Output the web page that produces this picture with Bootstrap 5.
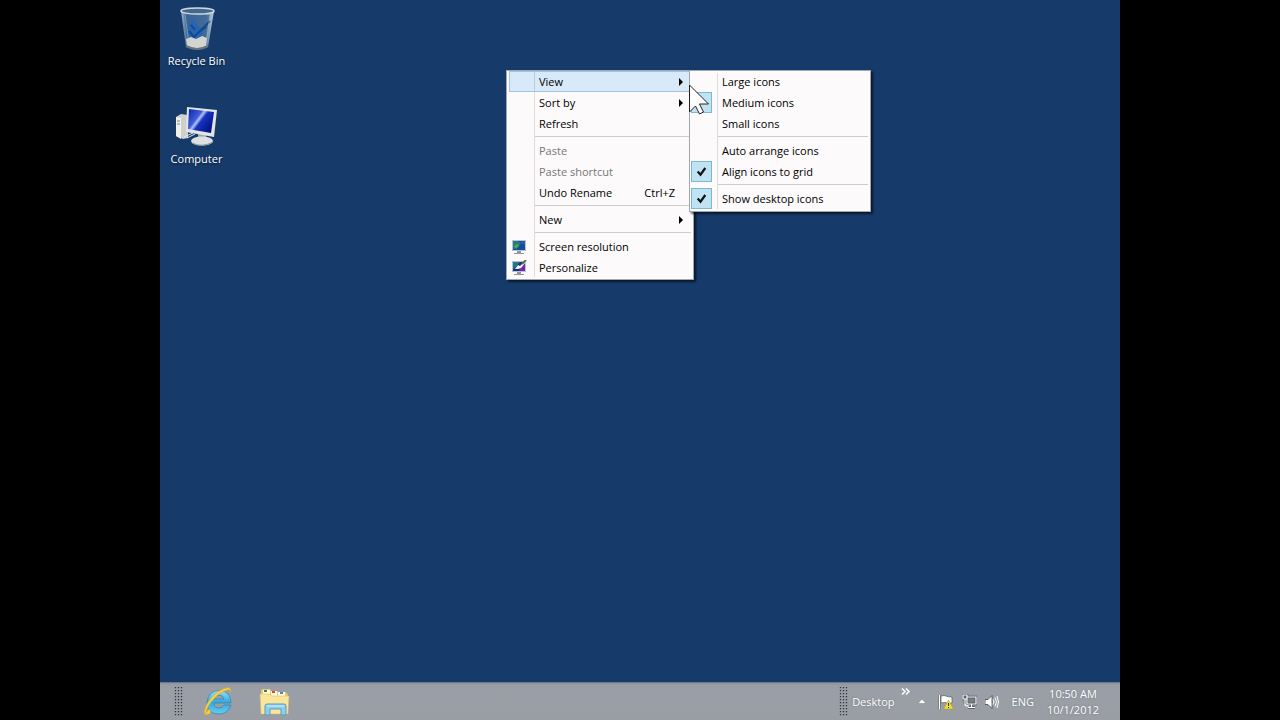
<!DOCTYPE html>
<html lang="en">
<head>
<meta charset="utf-8">
<meta name="viewport" content="width=device-width, initial-scale=1">
<title>Desktop</title>
<link href="https://cdn.jsdelivr.net/npm/bootstrap@5.3.0/dist/css/bootstrap.min.css" rel="stylesheet">
<style>
  body { background: #000; font-family: "Open Sans", "Noto Sans", sans-serif; font-size: 11px; line-height: 16px; }
  svg { display: block; flex: none; }
  .screen { width: calc(100vh * 4 / 3); max-width: 100%; min-height: 100vh; background: #163a69; }
  .shortcut { width: 73px; height: 98px; color: #fff; text-shadow: 0 1px 2px #0a1c38; }
  .shortcut:hover { color: #fff; }
  .shortcut svg { margin-bottom: 3px; }
  .ctx { top: 70px; background: #fcfafa; border: 1px solid #a3a7b0; box-shadow: 2px 2px 2px rgba(0,0,0,.6); padding-bottom: 1px; color: #000; }
  .ctx-main { left: 346px; width: 188px; }
  .ctx-sub { left: 529px; width: 182px; height: 142px; }
  .ctx::before { content: ""; position: absolute; top: 2px; bottom: 2px; left: 27px; width: 1px; background: #dcdcde; }
  .entry { position: relative; display: flex; align-items: center; width: 100%; height: 21px; padding: 0 14px 0 32px; border: 0; background: none; color: inherit; text-align: left; }
  .entry:disabled { color: #777; }
  .entry.is-open { margin-left: 2px; width: 181px; padding: 0 5px 0 29px; border: 1px solid #a5c3dd; background: #d8eafa; }
  .entry.is-open::before { content: ""; position: absolute; left: 24px; top: 0; bottom: 0; width: 1px; background: #b4cce2; }
  .entry.has-sub { padding-right: 9px; }
  .entry.has-sub.is-open { padding-right: 5px; }
  .glyph { width: 16px; margin-left: -28px; margin-right: 12px; }
  .divide { height: 1px; margin: 2px 2px 3px 28px; border: 0; background: #ccc; opacity: 1; }
  .tick { appearance: none; width: 21px; height: 21px; margin: 0 10px 0 -31px; flex: none; }
  .tick:checked { border: 1px solid #7db8d2; background: #bfe3f2 center / 11px 11px no-repeat; }
  .tick[type=checkbox]:checked { background-image: url("data:image/svg+xml,%3Csvg xmlns='http://www.w3.org/2000/svg' viewBox='0 0 11 11'%3E%3Cpath d='M1.7 5.5 4.5 8.7 9.3 2' fill='none' stroke='%23111' stroke-width='2.2'/%3E%3C/svg%3E"); }
  .pointer { left: 528px; top: 84px; pointer-events: none; }
  .taskbar { height: 38px; padding: 0 18px 0 14px; background: linear-gradient(#8e949d, #9a9fa7 3px, #9a9da4); border-top: 1px solid #68788f; color: #fff; text-shadow: 0 0 2px #6d7179; }
  .taskbar button { border: 0; padding: 0; background: none; color: inherit; text-shadow: inherit; }
  .pins { gap: 27px; margin-left: 21px; }
  .tray { gap: 8px; margin-left: 6px; }
  .lang { gap: 10px; margin-left: 12px; }
  .clock { width: 58px; }
</style>
</head>
<body class="d-flex justify-content-center min-vh-100 overflow-hidden">
<div class="screen d-flex flex-column">
  <main class="flex-grow-1 position-relative">
    <div class="d-flex flex-column align-items-center position-absolute">
      <a href="#" class="shortcut d-flex flex-column align-items-center text-decoration-none text-nowrap pt-1">
        <svg width="40" height="46" viewBox="0 0 40 46" aria-hidden="true">
          <defs><linearGradient id="bin" x2="1"><stop stop-color="#9db4cb"/><stop offset=".18" stop-color="#4a6d95"/><stop offset=".75" stop-color="#5c7fa4"/><stop offset="1" stop-color="#c2d0dd"/></linearGradient></defs>
          <path d="M4 7 9 43Q20 49 31 43L37 7Z" fill="url(#bin)"/>
          <path d="M7 11h26l-4 27H11Z" fill="#315f93" opacity=".6"/>
          <path d="m12 20 4-5 5 7 3 2 2 2-1 8-13 2-2-8 3-2Z" fill="#2466b4"/>
          <path d="m21 29 12-12M23 27l6-4M12 27l5 6 5-5M14 21l4 5" stroke="#174887" stroke-width="2" fill="none"/>
          <path d="m9 35 5-2 5 2 6-3 5 2-1 8Q20 47 10 42Z" fill="#d5d5d0"/>
          <path d="M9 42Q20 48 31 42" stroke="#687480" stroke-width="2" fill="none"/>
          <path d="m8 11 4 28M33 11l-4 28" stroke="#b8cbdc" opacity=".5"/>
          <ellipse cx="20.500" cy="7" rx="16.500" ry="3" fill="#45678a" stroke="#cbd7e2" stroke-width="1.500"/>
        </svg>Recycle Bin</a>
      <a href="#" class="shortcut d-flex flex-column align-items-center text-decoration-none text-nowrap pt-1">
        <svg width="46" height="46" viewBox="1 1 46 46" aria-hidden="true">
          <defs><linearGradient id="lcd" x2="1" y2=".7"><stop stop-color="#0824b1"/><stop offset=".4" stop-color="#405dd6"/><stop offset=".48" stop-color="#b3c2f3"/><stop offset=".58" stop-color="#1633be"/><stop offset="1" stop-color="#001384"/></linearGradient></defs>
          <path d="m3 16 5-3 7 1v23l-5 1-7-3Z" fill="#cdd0cd"/><path d="m3 16 5 1v21l-5-3Z" fill="#f2f1e8"/>
          <path d="M4 20h3M4 23h3" stroke="#7b837a"/><path d="m11 36 9-4M14 37l8-4" stroke="#e4e7eb"/>
          <path d="m25 32 8 1v6h-8Z" fill="#9da5ab"/><ellipse cx="29" cy="40" rx="11" ry="4.500" fill="#dce0e0"/><path d="M19 42Q29 47 40 41" stroke="#8d959a" fill="none"/>
          <path d="m14 6 30 3-3 27-28-5Z" fill="#e2e5e7"/><path d="m16 8 25 3-3 21-23-4Z" fill="url(#lcd)"/>
        </svg>Computer</a>
    </div>

    <div class="ctx ctx-main position-absolute text-nowrap" role="menu" aria-label="Desktop">
      <button class="entry has-sub is-open" role="menuitem">View<svg class="ms-auto" width="5" height="8" viewBox="0 0 5 8"><path d="M0 0 4 4 0 8Z"/></svg></button>
      <button class="entry has-sub" role="menuitem">Sort by<svg class="ms-auto" width="5" height="8" viewBox="0 0 5 8"><path d="M0 0 4 4 0 8Z"/></svg></button>
      <button class="entry" role="menuitem">Refresh</button>
      <hr class="divide">
      <button class="entry" role="menuitem" disabled>Paste</button>
      <button class="entry" role="menuitem" disabled>Paste shortcut</button>
      <button class="entry" role="menuitem">Undo Rename<span class="ms-auto pe-1">Ctrl+Z</span></button>
      <hr class="divide">
      <button class="entry has-sub" role="menuitem">New<svg class="ms-auto" width="5" height="8" viewBox="0 0 5 8"><path d="M0 0 4 4 0 8Z"/></svg></button>
      <hr class="divide">
      <button class="entry" role="menuitem"><svg class="glyph" height="16" viewBox="0 0 16 16"><path d="M1 1h14v11H1Z" fill="#b7c3d4"/><path d="M2 2h12v9H2Z" fill="#164c9a"/><path d="M2 2h5l3 2-3 5-5 1Z" fill="#277b82"/><path d="m3 7 3-2 2 1-3 4Z" fill="#51aa4b"/><path d="m9 3 5-1v4Z" fill="#255eb8"/><path d="M6 12h4v2h3v1H3v-1h3Z" fill="#94949c"/></svg>Screen resolution</button>
      <button class="entry" role="menuitem"><svg class="glyph" height="16" viewBox="0 0 16 16"><path d="M1 1h14v11H1Z" fill="#b7c3d4"/><path d="M2 2h12v9H2Z" fill="#1c2e84"/><path d="M2 2h7L3 9H2Z" fill="#247a81"/><path d="m9 7 5-3v7H8Z" fill="#7726a5"/><path d="m4 9 3-4 2 1 5-5 1 1-5 6-3 1Z" fill="#f2f6fa"/><path d="m11 4 4-4" stroke="#467a43" stroke-width="2"/><path d="M6 12h4v2h3v1H3v-1h3Z" fill="#94949c"/></svg>Personalize</button>
    </div>

    <div class="ctx ctx-sub position-absolute text-nowrap" role="group" aria-label="View">
      <label class="entry" for="large"><input class="tick" type="radio" name="size" id="large">Large icons</label>
      <label class="entry" for="medium"><input class="tick" type="radio" name="size" id="medium" checked>Medium icons</label>
      <label class="entry" for="small"><input class="tick" type="radio" name="size" id="small">Small icons</label>
      <hr class="divide">
      <label class="entry" for="auto"><input class="tick" type="checkbox" id="auto">Auto arrange icons</label>
      <label class="entry" for="align"><input class="tick" type="checkbox" id="align" checked>Align icons to grid</label>
      <hr class="divide">
      <label class="entry" for="show"><input class="tick" type="checkbox" id="show" checked>Show desktop icons</label>
    </div>
    <svg class="pointer position-absolute" width="22" height="32" viewBox="0 0 22 32" aria-hidden="true"><path d="M1.500 1v27l6-6 4 8 4-2-4-8h9Z" fill="#fff" stroke="#222"/></svg>
  </main>

  <footer class="taskbar d-flex align-items-center text-nowrap">
    <svg width="9" height="30" viewBox="-1 0 9 30" aria-hidden="true"><path d="M.5 0v30M3.500 0v30M6.500 0v30" stroke="#30353d" stroke-width="1.300" stroke-dasharray="1.300 1.700"/></svg>
    <div class="pins d-flex align-items-center">
      <button aria-label="Internet Explorer">
        <svg width="28" height="30" viewBox="0 1 28 30">
          <defs><linearGradient id="ie" y2="1" x2="0"><stop stop-color="#9adff7"/><stop offset=".5" stop-color="#2fa9df"/><stop offset="1" stop-color="#6dcbed"/></linearGradient></defs>
          <path d="M27 17H10q0 5 5 5 3 0 5-3h7q-3 9-12 9Q3 28 3 16.500 4 5 15 4.500 27 5 27 17ZM20 13q-1-4-5-4t-5 4Z" fill="url(#ie)" stroke="#2685b8" stroke-width=".7"/>
          <path d="M5 23Q-1 31 3 28 0 26 7 16 14 7 23 4q4-1 3 3 3-8-7-4Q9 7 3 18-2 28 2 29q3 0 5-3Z" fill="#f5cf45" stroke="#d2a82b" stroke-width=".5"/>
        </svg></button>
      <button aria-label="File Explorer">
        <svg width="32" height="30" viewBox="0 1 32 30">
          <path d="M2 5q0-2 2-2h7l1 2h6l1 1h8l2 3v18H2Z" fill="#e8cb70"/>
          <path d="M4 4h7v5H4ZM12 5h6v5h-6ZM19 6h7v5h-7Z" fill="#fff8df"/>
          <path d="M5 4h3v2H5Z" fill="#298b4f"/><path d="M13 5h3v2h-3Z" fill="#d34d3d"/><path d="M21 6h3v2h-3Z" fill="#418bb8"/>
          <path d="M1 8h10l2 2h17l-1 18H2Z" fill="#f9e69b" stroke="#d8b75e" stroke-width=".5"/>
          <path d="M6 29V20q0-2 2-2h17q2 0 2 2v9h-5v-6H11v6Z" fill="#8ecdeb" stroke="#559fc8"/><path d="M8 20h17" stroke="#d5f2ff"/>
        </svg></button>
    </div>
    <svg class="ms-auto" width="9" height="30" viewBox="-1 0 9 30" aria-hidden="true"><path d="M.5 0v30M3.500 0v30M6.500 0v30" stroke="#30353d" stroke-width="1.300" stroke-dasharray="1.300 1.700"/></svg>
    <button class="ms-1">Desktop</button>
    <div class="tray d-flex align-items-center">
      <button class="mb-3 pb-1" aria-label="More"><svg width="9" height="7" viewBox="0 0 9 7"><path d="m1 .5 3 3-3 3m4-6 3 3-3 3" fill="none" stroke="#fff" stroke-width="1.500"/></svg></button>
      <button class="me-1" aria-label="Show hidden icons"><svg width="8" height="5" viewBox="0 0 8 5"><path d="M0 4.500 4 0l4 4.500Z" fill="#fff" stroke="#666" stroke-width=".4"/></svg></button>
      <button aria-label="Action Center"><svg width="16" height="16" viewBox="0 0 16 16"><path d="M1.500 1v14" stroke="#555" stroke-width="3"/><path d="M1.500 1v14" stroke="#fff" stroke-width="1.500"/><path d="M3 2q3-1 5 0t6 1v6q-3 1-5 0T3 9Z" fill="#fff" stroke="#555" stroke-width=".7"/><path d="m10.500 6 5 9h-10Z" fill="#f1df38" stroke="#a99a20" stroke-width=".6"/><path d="M10.500 9v3m0 1v1" stroke="#333"/></svg></button>
      <button aria-label="Network"><svg width="15" height="15" viewBox="0 0 15 15"><path d="M5 3h9v7H5ZM9.500 10v3M6 13.500h7M1 1h4v4H1ZM3 5v5" fill="#777d86" stroke="#4b4f56" stroke-width="2.500"/><path d="M5 3h9v7H5ZM9.500 10v3M6 13.500h7M1 1h4v4H1ZM3 5v5q0 2 4 2" fill="none" stroke="#fff" stroke-width="1.200"/></svg></button>
      <button aria-label="Volume"><svg width="15" height="14" viewBox="1 0 15 14"><path d="M1 4.500h3l4-4v13l-4-4H1Z" fill="#fff" stroke="#444" stroke-width=".8"/><path d="M9 4.500q2 2.500 0 5M11 2.500q3 4.500 0 9M13 1q3 6 0 12" fill="none" stroke="#fff"/></svg></button>
    </div>
    <div class="lang d-flex align-items-center">
      <button aria-label="Input language">ENG</button>
      <button class="clock text-center"><time>10:50 AM<br>10/1/2012</time></button>
    </div>
  </footer>
</div>
<script src="https://cdn.jsdelivr.net/npm/bootstrap@5.3.0/dist/js/bootstrap.bundle.min.js"></script>
</body>
</html>
